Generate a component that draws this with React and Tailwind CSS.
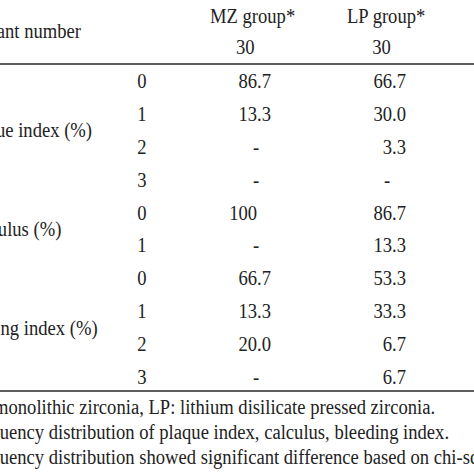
import React from 'react';

const rows = [
  { score: '0', mz: '86.7', lp: '66.7' },
  { score: '1', mz: '13.3', lp: '30.0' },
  { score: '2', mz: '-', lp: '3.3' },
  { score: '3', mz: '-', lp: '-' },
  { score: '0', mz: '100', lp: '86.7' },
  { score: '1', mz: '-', lp: '13.3' },
  { score: '0', mz: '66.7', lp: '53.3' },
  { score: '1', mz: '13.3', lp: '33.3' },
  { score: '2', mz: '20.0', lp: '6.7' },
  { score: '3', mz: '-', lp: '6.7' },
];

const groups = [
  { label: 'Plaque index (%)', from: 0, to: 4, cls: 'row-span-4 pr-[21px]' },
  { label: 'Calculus (%)', from: 4, to: 6, cls: 'row-span-2 pr-[54px]' },
  { label: 'Bleeding index (%)', from: 6, to: 10, cls: 'row-span-4 pr-[15px]' },
];

function mzClass(v) {
  if (v === '-') return 'pl-[86.7px]';
  if (v === '100') return 'pl-[61px]';
  return 'pl-[71px]';
}

function lpClass(v) {
  if (v === '-') return 'pl-[77.5px] justify-start';
  return 'justify-end';
}

function Cells({ row }) {
  return (
    <>
      <div className="flex items-center justify-center">{row.score}</div>
      <div className={`flex items-center ${mzClass(row.mz)}`}>{row.mz}</div>
      <div className={`flex items-center ${lpClass(row.lp)}`}>{row.lp}</div>
    </>
  );
}

export default function App() {
  return (
    <div className="w-[474px] h-[474px] overflow-hidden bg-white [font-family:Liberation_Serif,Times_New_Roman,serif]">
      <div className="w-[509.7px] origin-top-left scale-x-[0.93] text-[20px] text-[#222]">
        {/* header */}
        <div className="grid grid-cols-[120px_65.4px_150px_101.2px] grid-rows-[31px_31.5px]">
          <div className="row-span-2 col-span-2 flex items-center justify-end pr-[98.3px] whitespace-nowrap">
            Participant number
          </div>
          <div className="flex items-center pl-[40.4px] whitespace-nowrap">MZ group*</div>
          <div className="flex items-center pl-[37.7px] whitespace-nowrap">LP group*</div>
          <div className="flex items-center pl-[68.4px]">30</div>
          <div className="flex items-center pl-[64.8px]">30</div>
        </div>
        <div className="h-[2px] bg-[#5e5e5e]" />

        {/* body */}
        <div className="grid grid-cols-[120px_65.4px_150px_101.2px] grid-rows-[repeat(10,32.9px)]">
          {groups.map((g) => (
            <React.Fragment key={g.label}>
              <div className={`flex items-center justify-end whitespace-nowrap ${g.cls}`}>{g.label}</div>
              {rows.slice(g.from, g.to).map((row, i) => (
                <Cells key={i} row={row} />
              ))}
            </React.Fragment>
          ))}
        </div>
        <div className="h-[2px] -mt-[3px] bg-[#5e5e5e]" />

        {/* footnotes */}
        <div className="pt-[3px] -ml-[47px] leading-[25px] whitespace-nowrap">
          <p>MZ: monolithic zirconia, LP: lithium disilicate pressed zirconia.</p>
          <p>*Frequency distribution of plaque index, calculus, bleeding index.</p>
          <p>†Frequency distribution showed significant difference based on chi-square test (p &lt; 0.05).</p>
        </div>
      </div>
    </div>
  );
}
